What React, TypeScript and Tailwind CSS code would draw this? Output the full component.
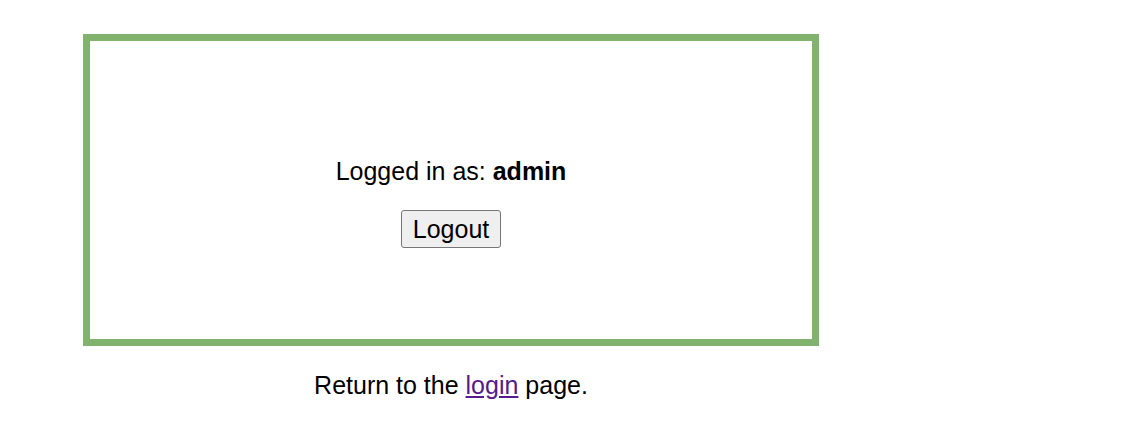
import React from "react";

export default function App() {
  return (
    <div
      className="w-[1124px] h-[438px] bg-white text-black"
      style={{ fontFamily: '"Liberation Sans", Arial, sans-serif' }}
    >
      <div className="pt-[34px] pl-[83px] w-[819px]">
        <div className="w-[736px] h-[312px] border-[7px] border-[#82b36e] flex flex-col items-center pt-[116px]">
          <p className="text-[25px] leading-[29px] h-[29px]">
            Logged in as: <b className="font-bold">admin</b>
          </p>
          <button className="mt-[24px] w-[100px] h-[38px] flex items-center justify-center rounded-[3px] border-[1.5px] border-[#767676] bg-[#efefef] text-[25px] leading-[29px] text-black">
            Logout
          </button>
        </div>
        <p className="mt-[25px] text-center text-[25px] leading-[29px]">
          Return to the{" "}
          <a href="#" className="text-[#551a8b] underline">
            login
          </a>{" "}
          page.
        </p>
      </div>
    </div>
  );
}
